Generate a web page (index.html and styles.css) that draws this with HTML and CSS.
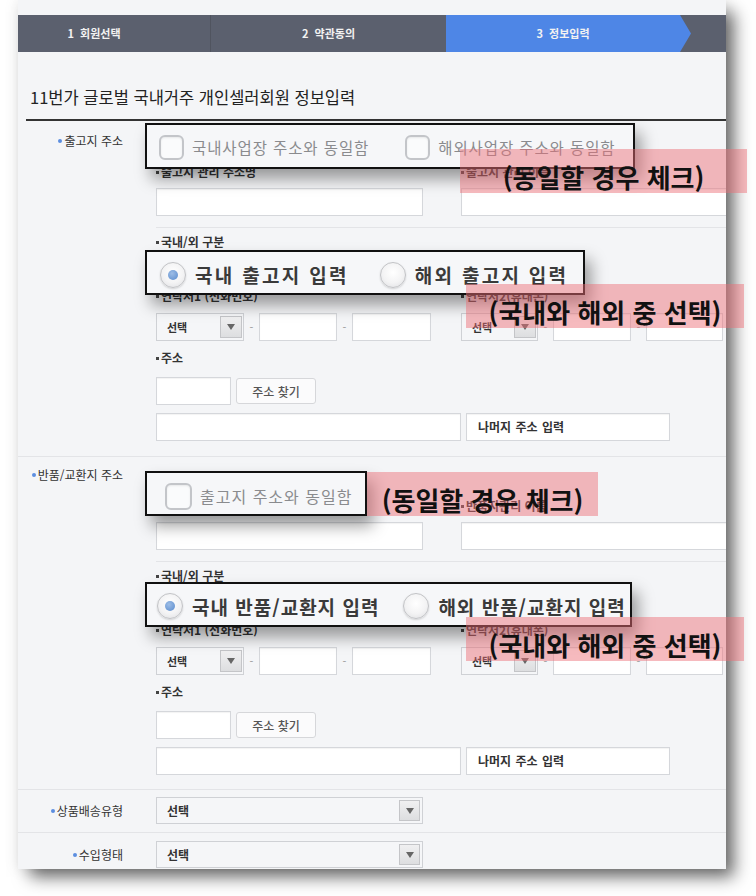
FILE: index.html
```html
<!DOCTYPE html>
<html lang="ko">
<head>
<meta charset="utf-8">
<title>11번가 글로벌 정보입력</title>
<link rel="stylesheet" href="styles.css">
</head>
<body>
<div class="stage">
  <div class="card">
    <div class="steps">
      <div class="step step1">1 회원선택</div>
      <div class="step step2">2 약관동의</div>
      <div class="step step3">3 정보입력</div>
    </div>
    <h1 class="title">11번가 글로벌 국내거주 개인셀러회원 정보입력</h1>

    <div class="row sec sec-ship">
      <div class="row-label"><span class="dot"></span>출고지 주소</div>
      <div class="content">
        <div class="chk-row">
          <span class="chk-s"><span class="cb-s"></span></span>
          <span class="chk-s"><span class="cb-s"></span></span>
        </div>
        <div class="pair gap-sub">
          <div class="sub col-l">출고지 관리 주소명</div>
          <div class="sub">출고지 관리 이름</div>
        </div>
        <div class="pair gap-in">
          <div class="col-l"><div class="input w-half"></div></div>
          <div class="input w-half"></div>
        </div>
        <div class="divider"></div>
        <div class="sub gap-div">국내/외 구분</div>
        <div class="chk-row gap-radio">
          <span class="chk-s"><span class="rb-s on"></span></span>
          <span class="chk-s"><span class="rb-s"></span></span>
        </div>
        <div class="pair gap-sub2">
          <div class="sub col-l">연락처1 (전화번호)</div>
          <div class="sub">연락처2(휴대폰)</div>
        </div>
        <div class="pair gap-in2">
          <div class="col-l phone">
            <div class="select w-sel1"><span>선택</span><span class="arrow"></span></div>
            <span class="dash">-</span>
            <div class="input w-ph1"></div>
            <span class="dash">-</span>
            <div class="input w-ph2"></div>
          </div>
          <div class="phone">
            <div class="select w-sel2"><span>선택</span><span class="arrow"></span></div>
            <span class="dash">-</span>
            <div class="input w-ph1"></div>
            <span class="dash">-</span>
            <div class="input w-ph3"></div>
          </div>
        </div>
        <div class="sub gap-sub3">주소</div>
        <div class="addr-row gap-addr">
          <div class="input w-zip"></div>
          <button class="btn" type="button">주소 찾기</button>
        </div>
        <div class="addr-row gap-addr2">
          <div class="input w-addr"></div>
          <div class="input w-rest"><span>나머지 주소 입력</span></div>
        </div>
      </div>
    </div>

    <div class="row sec sec-return">
      <div class="row-label"><span class="dot"></span>반품/교환지 주소</div>
      <div class="content">
        <div class="chk-row">
          <span class="chk-s"><span class="cb-s"></span></span>
        </div>
        <div class="pair gap-sub">
          <div class="sub col-l">반품/교환지 관리 이름</div>
          <div class="sub">반품지관리 이름</div>
        </div>
        <div class="pair gap-in">
          <div class="col-l"><div class="input w-half"></div></div>
          <div class="input w-half"></div>
        </div>
        <div class="divider"></div>
        <div class="sub gap-div">국내/외 구분</div>
        <div class="chk-row gap-radio">
          <span class="chk-s"><span class="rb-s on"></span></span>
          <span class="chk-s"><span class="rb-s"></span></span>
        </div>
        <div class="pair gap-sub2">
          <div class="sub col-l">연락처1 (전화번호)</div>
          <div class="sub">연락처2(휴대폰)</div>
        </div>
        <div class="pair gap-in2">
          <div class="col-l phone">
            <div class="select w-sel1"><span>선택</span><span class="arrow"></span></div>
            <span class="dash">-</span>
            <div class="input w-ph1"></div>
            <span class="dash">-</span>
            <div class="input w-ph2"></div>
          </div>
          <div class="phone">
            <div class="select w-sel2"><span>선택</span><span class="arrow"></span></div>
            <span class="dash">-</span>
            <div class="input w-ph1"></div>
            <span class="dash">-</span>
            <div class="input w-ph3"></div>
          </div>
        </div>
        <div class="sub gap-sub3">주소</div>
        <div class="addr-row gap-addr">
          <div class="input w-zip"></div>
          <button class="btn" type="button">주소 찾기</button>
        </div>
        <div class="addr-row gap-addr2">
          <div class="input w-addr"></div>
          <div class="input w-rest"><span>나머지 주소 입력</span></div>
        </div>
      </div>
    </div>

    <div class="row sec-simple">
      <div class="row-label simple-label"><span class="dot"></span>상품배송유형</div>
      <div class="content">
        <div class="select w-half big"><span>선택</span><span class="arrow"></span></div>
      </div>
    </div>
    <div class="row sec-simple last">
      <div class="row-label simple-label"><span class="dot"></span>수입형태</div>
      <div class="content">
        <div class="select w-half big"><span>선택</span><span class="arrow"></span></div>
      </div>
    </div>
  </div>

  <!-- annotation callouts -->
  <div class="callout co-1">
    <span class="cgroup"><span class="cbx"></span><span class="ctext">국내사업장 주소와 동일함</span></span>
    <span class="cgroup"><span class="cbx"></span><span class="ctext">해외사업장 주소와 동일함</span></span>
  </div>
  <div class="callout co-2">
    <span class="rgroup"><span class="rbx on"></span><span class="rtext">국내 출고지 입력</span></span>
    <span class="rgroup"><span class="rbx"></span><span class="rtext">해외 출고지 입력</span></span>
  </div>
  <div class="callout co-3">
    <span class="cgroup"><span class="cbx big"></span><span class="ctext big">출고지 주소와 동일함</span></span>
  </div>
  <div class="callout co-4">
    <span class="rgroup"><span class="rbx on"></span><span class="rtext tight">국내 반품/교환지 입력</span></span>
    <span class="rgroup"><span class="rbx"></span><span class="rtext tight">해외 반품/교환지 입력</span></span>
  </div>

  <div class="note note-1">(동일할 경우 체크)</div>
  <div class="note note-2">(국내와 해외 중 선택)</div>
  <div class="note note-3">(동일할 경우 체크)</div>
  <div class="note note-4">(국내와 해외 중 선택)</div>
</div>
</body>
</html>
```

FILE: styles.css
```css
* { box-sizing: border-box; }
html, body { margin: 0; padding: 0; background: #fff; }
body {
  font-family: "Noto Sans CJK KR", "Noto Sans", sans-serif;
  color: #333;
  width: 756px;
  height: 896px;
  overflow: hidden;
}
.stage { position: relative; width: 756px; height: 896px; }

.card {
  margin-left: 18px;
  width: 708px;
  height: 869px;
  padding-top: 15px;
  background: #f4f5f7;
  overflow: hidden;
  box-shadow: 10px 10px 16px -2px rgba(0,0,0,0.58), 0 0 14px rgba(0,0,0,0.10);
}

/* steps */
.steps { display: flex; height: 37px; background: #5b606e; }
.step {
  flex: none;
  color: #f2f2f2;
  font-size: 11px;
  font-weight: 700;
  line-height: 37px;
  text-align: center;
  word-spacing: 3px;
}
.step1 { width: 193px; padding-right: 40px; border-right: 1px solid #50545f; }
.step2 { width: 235px; }
.step3 {
  width: 245px;
  padding-right: 11px;
  background: #4e86e6;
  clip-path: polygon(0 0, calc(100% - 11px) 0, 100% 50%, calc(100% - 11px) 100%, 0 100%);
}

/* title */
.title {
  margin: 0 0 0 8px;
  padding: 35px 0 12px 4px;
  font-size: 16.5px;
  font-weight: 400;
  line-height: 20px;
  color: #222;
  border-bottom: 2px solid #333;
}

/* rows */
.row { display: flex; border-bottom: 1px solid #e3e4e7; }
.row-label {
  flex: none;
  width: 138px;
  padding-right: 33px;
  text-align: right;
  font-size: 12px;
  line-height: 16px;
  color: #333;
  white-space: nowrap;
}
.dot {
  display: inline-block;
  width: 4px;
  height: 4px;
  margin-right: 2px;
  border-radius: 50%;
  background: #5c8ee0;
  vertical-align: 3px;
}
.content { flex: 1; min-width: 0; }

.sec-ship { padding: 12px 0 15px; }
.sec-return { padding: 10px 0 14px; }

.chk-row { display: flex; gap: 240px; height: 20px; align-items: center; }
.chk-s { display: flex; align-items: center; }
.cb-s { width: 13px; height: 13px; border: 1px solid #bbb; border-radius: 2px; background: #fff; }
.rb-s { width: 13px; height: 13px; border: 1px solid #bbb; border-radius: 50%; background: #fff; }
.rb-s.on { background: radial-gradient(circle, #5f8fd0 0 3px, #fff 3.5px); }

.pair { display: flex; }
.col-l { flex: none; width: 305px; }

.sub {
  height: 14px;
  font-size: 12px;
  font-weight: 700;
  line-height: 14px;
  color: #333;
  white-space: nowrap;
}
.sub::before {
  content: "";
  display: inline-block;
  width: 3px;
  height: 3px;
  margin-right: 2px;
  background: #444;
  vertical-align: 3px;
}

.gap-sub { margin-top: 12px; }
.gap-in { margin-top: 9px; }
.divider { margin-top: 11px; height: 1px; background: #e3e4e7; }
.gap-div { margin-top: 7px; }
.gap-radio { margin-top: 7px; }
.gap-sub2 { margin-top: 13px; }
.gap-in2 { margin-top: 10px; }
.gap-sub3 { margin-top: 10px; }
.gap-addr { margin-top: 12px; }
.gap-addr2 { margin-top: 8px; }

.input {
  flex: none;
  height: 28px;
  border: 1px solid #d5d7db;
  background: #fff;
  box-shadow: inset 0 1px 1px rgba(0,0,0,0.05);
}
.w-half { width: 267px; }
.w-ph1 { width: 78px; }
.w-ph2 { width: 79px; }
.w-ph3 { width: 77px; }
.w-zip { width: 75px; }
.w-addr { width: 305px; }
.w-rest {
  width: 204px;
  padding-left: 11px;
  font-size: 12px;
  font-weight: 700;
  line-height: 26px;
  color: #333;
  word-spacing: 1px;
}

.phone { display: flex; align-items: center; }
.dash { flex: none; width: 15px; text-align: center; font-size: 11px; color: #999; }

.select {
  flex: none;
  display: flex;
  align-items: center;
  height: 28px;
  padding: 0 1px 0 10px;
  border: 1px solid #cfd1d5;
  background: #f5f6f8;
  font-size: 11px;
  font-weight: 700;
  color: #333;
}
.select.big { height: 27px; font-size: 12px; }
.w-sel1 { width: 88px; }
.w-sel2 { width: 77px; }
.arrow {
  position: relative;
  margin-left: auto;
  width: 22px;
  height: 22px;
  border: 1px solid #c4c5c8;
  background: linear-gradient(#f0f0f1, #dddee0);
}
.arrow::after {
  content: "";
  position: absolute;
  left: 6px;
  top: 7px;
  border-left: 4.5px solid transparent;
  border-right: 4.5px solid transparent;
  border-top: 6px solid #666;
}
.select.big .arrow { width: 21px; height: 21px; margin-right: 1px; }

.addr-row { display: flex; gap: 5px; align-items: center; }
.btn {
  width: 80px;
  height: 26px;
  margin: 0;
  padding: 0;
  border: 1px solid #d6d7da;
  border-radius: 3px;
  background: #fbfbfc;
  font-family: inherit;
  font-size: 12px;
  font-weight: 500;
  color: #555;
}

.sec-simple { padding: 7px 0 8px; }
.sec-simple.last { padding: 8px 0 0; border-bottom: 0; }
.simple-label { line-height: 27px; }

/* annotation callouts */
.callout {
  position: absolute;
  left: 145px;
  display: flex;
  align-items: center;
  border: 2px solid #111;
  background: #f6f7f9;
  box-shadow: 6px 10px 16px rgba(0,0,0,0.38);
}
.co-1 { top: 123px; width: 490px; height: 46px; padding: 2px 0 0 12px; gap: 36px; }
.co-2 { top: 250px; width: 440px; height: 45px; padding: 4px 0 0 13px; gap: 31px; }
.co-3 { top: 471px; width: 222px; height: 45px; padding: 5px 0 0 18px; }
.co-4 { top: 582px; width: 487px; height: 45px; padding: 3px 0 0 10px; gap: 24px; }

.cgroup, .rgroup { display: flex; align-items: center; gap: 8px; }
.rgroup { gap: 9px; }
.cbx {
  width: 25px;
  height: 25px;
  border: 2px solid #c3c5c9;
  border-radius: 6px;
  background: #fafbfc;
  box-shadow: inset 0 1px 2px rgba(0,0,0,0.08);
}
.cbx.big { width: 27px; height: 27px; }
.ctext { font-size: 15.5px; letter-spacing: 0.9px; color: #8a8b8e; white-space: nowrap; }
.ctext.big { font-size: 16px; letter-spacing: 1px; }

.rbx {
  position: relative;
  width: 26px;
  height: 26px;
  border: 1px solid #c2c3c6;
  border-radius: 50%;
  background: radial-gradient(circle at 50% 40%, #ffffff 0, #f3f3f4 55%, #dcdde0 100%);
  box-shadow: 0 1px 2px rgba(0,0,0,0.15);
}
.rbx.on::after {
  content: "";
  position: absolute;
  left: 7px;
  top: 7px;
  width: 10px;
  height: 10px;
  border-radius: 50%;
  background: radial-gradient(circle at 40% 35%, #9dbde6, #5a8bcd);
}
.rtext {
  font-size: 19px;
  font-weight: 700;
  letter-spacing: 2.3px;
  color: #3a3a3a;
  white-space: nowrap;
}
.rtext.tight { letter-spacing: 1px; }

.note {
  position: absolute;
  height: 44px;
  padding-top: 12px;
  background: rgba(236, 108, 116, 0.47);
  font-size: 26px;
  font-weight: 700;
  line-height: 32px;
  color: #111;
  text-align: center;
  white-space: nowrap;
}
.note-1 { left: 460px; top: 149px; width: 287px; }
.note-2 { left: 466px; top: 284px; width: 278px; }
.note-3 { left: 367px; top: 472px; width: 231px; }
.note-4 { left: 466px; top: 617px; width: 278px; }
```
